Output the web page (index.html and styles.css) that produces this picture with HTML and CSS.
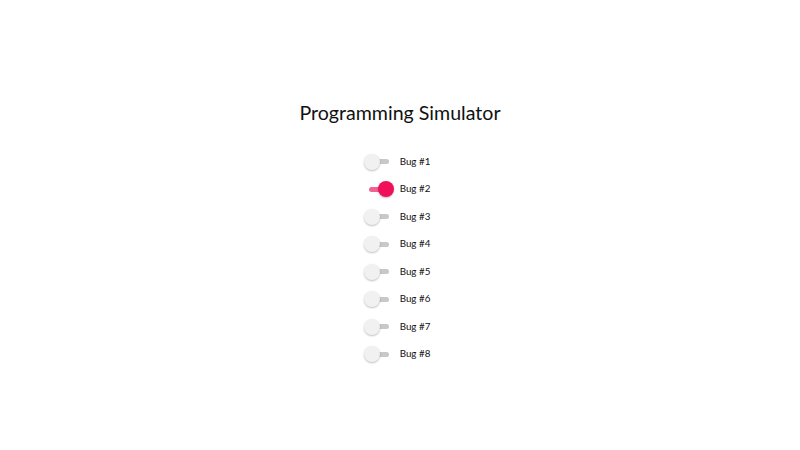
FILE: index.html
```html
<!DOCTYPE html>
<html>
<head>
<meta charset="utf-8">
<link rel="stylesheet" href="styles.css">
</head>
<body>
<main class="page">
  <h1 class="title">Programming Simulator</h1>
  <ul class="bugs">
    <li class="bug"><span class="switch"><span class="track"></span><span class="thumb"></span></span><span class="label">Bug #1</span></li>
    <li class="bug"><span class="switch on"><span class="track"></span><span class="thumb"></span></span><span class="label">Bug #2</span></li>
    <li class="bug"><span class="switch"><span class="track"></span><span class="thumb"></span></span><span class="label">Bug #3</span></li>
    <li class="bug"><span class="switch"><span class="track"></span><span class="thumb"></span></span><span class="label">Bug #4</span></li>
    <li class="bug"><span class="switch"><span class="track"></span><span class="thumb"></span></span><span class="label">Bug #5</span></li>
    <li class="bug"><span class="switch"><span class="track"></span><span class="thumb"></span></span><span class="label">Bug #6</span></li>
    <li class="bug"><span class="switch"><span class="track"></span><span class="thumb"></span></span><span class="label">Bug #7</span></li>
    <li class="bug"><span class="switch"><span class="track"></span><span class="thumb"></span></span><span class="label">Bug #8</span></li>
  </ul>
</main>
</body>
</html>
```
FILE: styles.css
```css
html, body {
  margin: 0;
  padding: 0;
  background: #ffffff;
}
.page {
  width: 800px;
  height: 450px;
  display: flex;
  flex-direction: column;
  align-items: center;
  padding-top: 101px;
  box-sizing: border-box;
  font-family: Lato, "Liberation Sans", sans-serif;
  color: #111;
}
.title {
  margin: 0;
  font-size: 19.6px;
  line-height: 24px;
  font-weight: 400;
}
.bugs {
  list-style: none;
  margin: 22px 0 0 -6px;
  padding: 0;
  display: flex;
  flex-direction: column;
}
.bug {
  height: 27.5px;
  display: flex;
  align-items: center;
  gap: 6px;
}
.switch {
  position: relative;
  width: 30px;
  height: 16px;
  display: block;
  top: 1px;
}
.track {
  position: absolute;
  left: 5px;
  top: 5.5px;
  width: 20px;
  height: 5px;
  border-radius: 3px;
  background: #c8c8c8;
}
.thumb {
  position: absolute;
  left: 0;
  top: 0;
  width: 16px;
  height: 16px;
  border-radius: 50%;
  background: #f1f1f1;
  box-shadow: 0 1px 2px rgba(0,0,0,0.25);
}
.switch.on .track {
  background: #f06292;
}
.switch.on .thumb {
  left: 14px;
  background: #f0105a;
}
.label {
  font-size: 9.8px;
  color: #111;
}
```
